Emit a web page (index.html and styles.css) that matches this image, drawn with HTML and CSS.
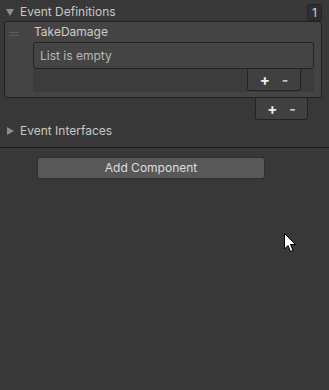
FILE: index.html
```html
<!DOCTYPE html>
<html>
<head>
<meta charset="utf-8">
<link rel="stylesheet" href="styles.css">
</head>
<body>
<div class="inspector">
  <div class="foldout-head">
    <span class="tri-down"></span>
    <span class="label">Event Definitions</span>
    <span class="badge">1</span>
  </div>
  <div class="list-box">
    <div class="element">
      <div class="handle"><span></span><span></span></div>
      <div class="element-body">
        <div class="el-title">TakeDamage</div>
        <div class="empty-box">List is empty</div>
        <div class="inner-footer-row">
          <div class="pm"><span class="plus">+</span><span class="minus">-</span></div>
        </div>
      </div>
    </div>
  </div>
  <div class="outer-footer-row">
    <div class="pm outer"><span class="plus">+</span><span class="minus">-</span></div>
  </div>
  <div class="foldout-head closed">
    <span class="tri-right"></span>
    <span class="label">Event Interfaces</span>
  </div>
  <div class="separator"></div>
  <div class="add-row">
    <div class="add-btn">Add Component</div>
  </div>
</div>
<svg class="cursor" width="13" height="20" viewBox="0 0 13 20">
  <path d="M0.5 0.5 L0.5 16 L4 12.5 L6.5 18.5 L9 17.5 L6.5 11.5 L11.5 11.5 Z" fill="#ffffff" stroke="#000000" stroke-width="1"/>
</svg>
</body>
</html>
```

FILE: styles.css
```css
html, body {
  margin: 0;
  padding: 0;
  background: #383838;
  width: 329px;
  height: 390px;
  overflow: hidden;
  font-family: Inter, "Noto Sans", sans-serif;
  font-size: 12px;
  color: #c8c8c8;
}
.inspector {
  display: flex;
  flex-direction: column;
  padding-top: 3px;
}
.foldout-head {
  display: flex;
  align-items: center;
  height: 18px;
  padding-left: 6px;
  padding-right: 7px;
}
.tri-down {
  width: 0;
  height: 0;
  border-left: 4px solid transparent;
  border-right: 4px solid transparent;
  border-top: 7px solid #8c8c8c;
  margin-right: 6px;
}
.tri-right {
  width: 0;
  height: 0;
  border-top: 4px solid transparent;
  border-bottom: 4px solid transparent;
  border-left: 7px solid #8c8c8c;
  margin-left: 1px;
  margin-right: 6px;
}
.label {
  flex: 1;
  line-height: 18px;
}
.badge {
  width: 15px;
  height: 17px;
  box-sizing: border-box;
  background: #2e2e2e;
  border: 1px solid #242424;
  border-radius: 3px;
  color: #d4d4d4;
  text-align: center;
  line-height: 15px;
  font-size: 12px;
}
.list-box {
  margin: 0 7px 0 4px;
  height: 77px;
  box-sizing: border-box;
  background: #444444;
  border: 1px solid #212121;
  border-radius: 3px;
  display: flex;
  flex-direction: column;
}
.element {
  display: flex;
  flex: 1;
  padding-bottom: 5px;
}
.handle {
  width: 28px;
  display: flex;
  flex-direction: column;
  align-items: flex-start;
  padding: 10px 0 0 4px;
  box-sizing: border-box;
  gap: 2px;
}
.handle span {
  display: block;
  width: 10px;
  height: 1px;
  background: #5c5c5c;
}
.element-body {
  flex: 1;
  display: flex;
  flex-direction: column;
  margin-right: 7px;
}
.el-title {
  height: 20px;
  line-height: 20px;
  padding-left: 1px;
  color: #cdcdcd;
}
.empty-box {
  height: 27px;
  box-sizing: border-box;
  border: 1px solid #232323;
  border-radius: 3px;
  background: #444444;
  padding-left: 6px;
  line-height: 25px;
  color: #b8b8b8;
}
.inner-footer-row {
  flex: 1;
  background: #3c3c3c;
  display: flex;
  justify-content: flex-end;
  padding-right: 13px;
  align-items: flex-start;
}
.pm {
  width: 54px;
  height: 22px;
  box-sizing: border-box;
  background: #404040;
  border: 1px solid #232323;
  border-top: none;
  border-radius: 0 0 3px 3px;
  display: flex;
  align-items: center;
  justify-content: center;
  gap: 12px;
  color: #ececec;
  font-weight: 700;
  font-size: 15px;
}
.pm .minus {
  font-weight: 700;
  font-size: 14px;
  color: #c8c8c8;
}
.outer-footer-row {
  display: flex;
  justify-content: flex-end;
  padding-right: 21px;
}
.pm.outer {
  width: 53px;
}
.foldout-head.closed {
  margin-top: 1px;
  height: 20px;
}
.separator {
  height: 1px;
  background: #1e1e1e;
  margin-top: 6px;
}
.add-row {
  display: flex;
  padding-left: 37px;
  margin-top: 9px;
}
.add-btn {
  width: 228px;
  height: 22px;
  box-sizing: border-box;
  background: #585858;
  border: 1px solid #303030;
  border-radius: 3px;
  text-align: center;
  line-height: 20px;
  color: #dedede;
}
.cursor {
  position: absolute;
  left: 284px;
  top: 233px;
}
```
